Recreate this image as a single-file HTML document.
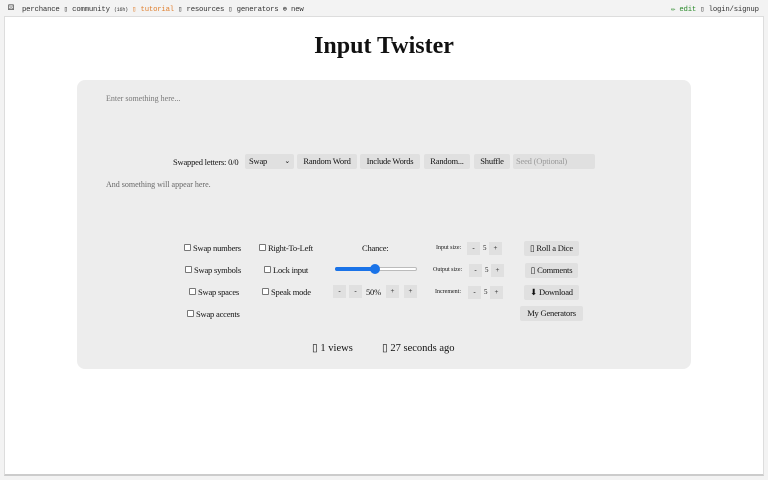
<!DOCTYPE html>
<html><head><meta charset="utf-8"><style>
*{box-sizing:border-box;margin:0;padding:0}
body{width:768px;height:480px;background:#f3f3f3;position:relative;overflow:hidden;font-family:"Liberation Serif",serif;color:#111}
.a{position:absolute;white-space:nowrap}
.nav{font-family:"Liberation Mono",monospace;font-size:7.3px;top:4px;color:#333;letter-spacing:-0.2px}
.frame{position:absolute;left:4px;top:16px;width:760px;height:460px;background:#fff;border:1px solid #ddd;border-bottom:2px solid #ccc}
.panel{position:absolute;left:77px;top:80px;width:614px;height:289px;background:#ededed;border-radius:8px}
.btn{position:absolute;background:#e0e0e0;font-size:8.5px;letter-spacing:-0.2px;text-align:center;line-height:15px;height:15px;border-radius:2px}
.sm{position:absolute;background:#e0e0e0;font-size:7px;text-align:center;width:13px;height:13px;line-height:13px}
.cb{display:inline-block;width:7px;height:7px;border:1px solid #777;border-radius:1px;background:#fff;vertical-align:0px;margin-right:2px}
.l{font-size:8.5px;letter-spacing:-0.2px}
</style></head><body>
<div class="a nav" style="left:8px;top:2px;font-size:10px">⚄</div>
<div class="a nav" style="left:22px">perchance ▯ community <span style="font-size:5px">(16h)</span> <span style="color:#e08030">▯ tutorial</span> ▯ resources ▯ generators ⊕ new</div>
<div class="a nav" style="left:671px"><span style="color:#2a8a2a">✏ edit</span> ▯ login/signup</div>
<div class="frame"></div>
<div class="a" style="left:0;width:768px;text-align:center;top:33px;font-size:24px;font-weight:bold">Input Twister</div>
<div class="panel"></div>
<div class="a" style="left:106px;top:94px;font-size:8px;color:#777">Enter something here...</div>
<div class="a l" style="left:173px;top:157px">Swapped letters: 0/0</div>
<div class="btn" style="left:245px;top:154px;width:49px;text-align:left;padding-left:4px">Swap <span style="position:absolute;right:4px;font-size:7px">⌄</span></div>
<div class="btn" style="left:297px;top:154px;width:60px">Random Word</div>
<div class="btn" style="left:360px;top:154px;width:60px">Include Words</div>
<div class="btn" style="left:424px;top:154px;width:46px">Random...</div>
<div class="btn" style="left:474px;top:154px;width:36px">Shuffle</div>
<div class="btn" style="left:513px;top:154px;width:82px;text-align:left;padding-left:3px;color:#999">Seed (Optional)</div>
<div class="a" style="left:106px;top:180px;font-size:8px;color:#666">And something will appear here.</div>

<div class="a l" style="left:184px;top:243px"><span class="cb"></span>Swap numbers</div>
<div class="a l" style="left:185px;top:265px"><span class="cb"></span>Swap symbols</div>
<div class="a l" style="left:189px;top:287px"><span class="cb"></span>Swap spaces</div>
<div class="a l" style="left:187px;top:309px"><span class="cb"></span>Swap accents</div>
<div class="a l" style="left:259px;top:243px"><span class="cb"></span>Right-To-Left</div>
<div class="a l" style="left:264px;top:265px"><span class="cb"></span>Lock input</div>
<div class="a l" style="left:262px;top:287px"><span class="cb"></span>Speak mode</div>
<div class="a l" style="left:362px;top:243px">Chance:</div>
<div class="a" style="left:335px;top:267px;width:82px;height:4px;border-radius:2px;background:#fff;border:1px solid #bbb"></div>
<div class="a" style="left:335px;top:267px;width:40px;height:4px;border-radius:2px;background:#1a73e8"></div>
<div class="a" style="left:370px;top:264px;width:10px;height:10px;border-radius:50%;background:#1a73e8"></div>
<div class="sm" style="left:333px;top:285px">-</div>
<div class="sm" style="left:349px;top:285px">-</div>
<div class="a l" style="left:366px;top:287px">50%</div>
<div class="sm" style="left:386px;top:285px">+</div>
<div class="sm" style="left:404px;top:285px">+</div>
<div class="a" style="left:436px;top:245px;font-size:6px">Input size:</div>
<div class="sm" style="left:467px;top:242px">-</div><div class="a" style="left:483px;top:244px;font-size:7px">5</div><div class="sm" style="left:489px;top:242px">+</div>
<div class="a" style="left:433px;top:267px;font-size:6px">Output size:</div>
<div class="sm" style="left:469px;top:264px">-</div><div class="a" style="left:485px;top:266px;font-size:7px">5</div><div class="sm" style="left:491px;top:264px">+</div>
<div class="a" style="left:435px;top:289px;font-size:6px">Increment:</div>
<div class="sm" style="left:468px;top:286px">-</div><div class="a" style="left:484px;top:288px;font-size:7px">5</div><div class="sm" style="left:490px;top:286px">+</div>
<div class="btn" style="left:524px;top:241px;width:55px;height:15px">▯ Roll a Dice</div>
<div class="btn" style="left:525px;top:263px;width:53px">▯ Comments</div>
<div class="btn" style="left:524px;top:285px;width:55px">⬇ Download</div>
<div class="btn" style="left:520px;top:306px;width:63px">My Generators</div>
<div class="a" style="left:312px;top:342px;font-size:10.5px">▯ 1 views</div>
<div class="a" style="left:382px;top:342px;font-size:10.5px">▯ 27 seconds ago</div>
</body></html>
